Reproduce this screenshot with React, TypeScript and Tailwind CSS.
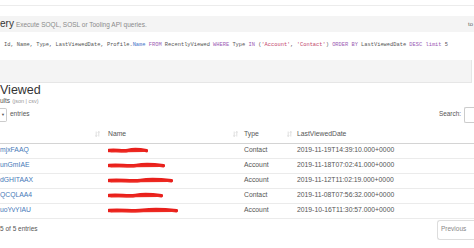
import React from 'react';

const rows = [
  { id: 'mjxFAAQ', type: 'Contact', date: '2019-11-19T14:39:10.000+0000', red: 40 },
  { id: 'unGmIAE', type: 'Account', date: '2019-11-18T07:02:41.000+0000', red: 57 },
  { id: 'dGHITAAX', type: 'Account', date: '2019-11-12T11:02:19.000+0000', red: 65 },
  { id: 'QCQLAA4', type: 'Contact', date: '2019-11-08T07:56:32.000+0000', red: 55 },
  { id: 'uoYvYIAU', type: 'Account', date: '2019-10-16T11:30:57.000+0000', red: 70 },
];

const SortIcon: React.FC = () => (
  <svg width="5" height="6" viewBox="0 0 5 6" className="shrink-0">
    <path d="M1.2 0.5 V5.5 M0.2 4.4 L1.2 5.5 L2.2 4.4" stroke="#d2d2d2" strokeWidth="0.7" fill="none" />
    <path d="M3.8 5.5 V0.5 M2.8 1.6 L3.8 0.5 L4.8 1.6" stroke="#d2d2d2" strokeWidth="0.7" fill="none" />
  </svg>
);

// red redaction marks over the Name column
const Scribble: React.FC<{ w: number }> = ({ w }) => (
  <svg width={w} height="7" viewBox={`0 0 ${w} 7`}>
    <path
      d={`M1 3.5 C ${w * 0.2} 2, ${w * 0.35} 5, ${w * 0.5} 3.3 S ${w * 0.8} 2.3, ${w - 1.5} 3.7`}
      stroke="#e8201c"
      strokeWidth="3.4"
      strokeLinecap="round"
      fill="none"
    />
    <path d={`M3 4.6 L ${w - 4} 4.2`} stroke="#ee2a22" strokeWidth="1.8" strokeLinecap="round" fill="none" />
  </svg>
);

const kw = 'text-[#9b5bb4]';
const str = 'text-[#c2456b]';

const App: React.FC = () => {
  return (
    <div className="w-[474px] h-[248px] overflow-hidden bg-white text-[#444] font-['Liberation_Sans',Arial,sans-serif]">
      {/* nav bottom */}
      <div className="h-[6px] border-b border-[#ececec]" />
      <div className="h-[10px]" />

      {/* page header */}
      <div className="h-[16px] bg-[#f4f4f4] flex items-center justify-between">
        <div className="flex items-baseline gap-[2px]">
          <span className="text-[10px] leading-none text-[#333]">ery</span>
          <span className="text-[6.5px] leading-none text-[#8a8a8a]">Execute SOQL, SOSL or Tooling API queries.</span>
        </div>
        <span className="text-[6px] leading-none text-[#666] pr-[1px]">to</span>
      </div>

      {/* query */}
      <div className="h-[28px] flex items-center pl-[4px] whitespace-pre font-['Liberation_Mono',monospace] text-[5.36px] leading-none text-[#555]">
        <span>Id, Name, Type, LastViewedDate, Profile.</span>
        <span className="text-[#3f74c8]">Name</span>
        <span> </span>
        <span className={kw}>FROM</span>
        <span> RecentlyViewed </span>
        <span className={kw}>WHERE</span>
        <span> Type </span>
        <span className={kw}>IN</span>
        <span> (</span>
        <span className={str}>'Account'</span>
        <span>, </span>
        <span className={str}>'Contact'</span>
        <span>) </span>
        <span className={kw}>ORDER BY</span>
        <span> LastViewedDate </span>
        <span className={kw}>DESC</span>
        <span> </span>
        <span className={kw}>limit</span>
        <span> 5</span>
      </div>

      {/* options bar */}
      <div className="h-[23px] mr-[2px] bg-[#f4f4f4] border-b border-r border-[#e6e6e6]" />

      {/* results heading */}
      <div className="text-[12.5px] leading-[14px] text-[#333]">Viewed</div>
      <div className="h-[9px] flex items-center gap-[2px]">
        <span className="text-[6.5px] leading-none text-[#555]">ults</span>
        <span className="text-[5.5px] leading-none text-[#999]">(json | csv)</span>
      </div>

      {/* length + search */}
      <div className="h-[17px] flex items-center justify-between">
        <div className="flex items-center gap-[3px]">
          <div className="h-[14px] w-[7px] border border-l-0 border-[#ccc] rounded-r-[2px] flex items-center justify-center text-[4px] text-[#555]">▼</div>
          <span className="text-[6.5px] leading-none text-[#555]">entries</span>
        </div>
        <div className="flex items-center gap-[3px]">
          <span className="text-[6.4px] leading-none text-[#555]">Search:</span>
          <div className="h-[16px] w-[10px] border border-r-0 border-[#ccc] rounded-l-[2px]" />
        </div>
      </div>

      {/* table */}
      <table className="mt-[3px] w-[474px] table-fixed border-collapse text-[6.8px] leading-none">
        <colgroup>
          <col className="w-[103px]" />
          <col className="w-[137px]" />
          <col className="w-[54px]" />
          <col />
        </colgroup>
        <thead>
          <tr className="h-[17px] border-b border-[#d4d4d4] text-[#555]">
            <th className="font-normal p-0">
              <div className="flex items-center justify-end pr-[3px]"><SortIcon /></div>
            </th>
            <th className="font-normal p-0">
              <div className="flex items-center justify-between pl-[5px] pr-[2px]"><span>Name</span><SortIcon /></div>
            </th>
            <th className="font-normal p-0">
              <div className="flex items-center justify-between pl-[4px] pr-[2px]"><span>Type</span><SortIcon /></div>
            </th>
            <th className="font-normal p-0 text-left pl-[3px]">LastViewedDate</th>
          </tr>
        </thead>
        <tbody>
          {rows.map((r) => (
            <tr key={r.id} className="h-[15px] border-b border-[#ebebeb]">
              <td className="p-0 text-[#4679b8] whitespace-nowrap overflow-hidden">{r.id}</td>
              <td className="p-0 pl-[5px]"><div className="flex items-center"><Scribble w={r.red} /></div></td>
              <td className="p-0 pl-[4px] text-[#555]">{r.type}</td>
              <td className="p-0 pl-[3px] text-[#555]">{r.date}</td>
            </tr>
          ))}
        </tbody>
      </table>

      {/* info + pagination */}
      <div className="mt-[1px] h-[20px] flex items-center justify-between">
        <span className="text-[6.5px] leading-none text-[#555]">5 of 5 entries</span>
        <div className="h-[20px] w-[37px] border border-r-0 border-[#ddd] rounded-l-[3px] flex items-center pl-[3px] text-[6.5px] leading-none text-[#888]">
          Previous
        </div>
      </div>
    </div>
  );
};

export default App;
